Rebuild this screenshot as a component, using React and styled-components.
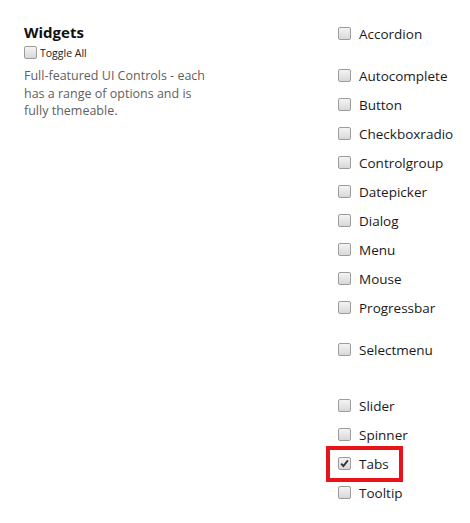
import React from "react";
import styled, { createGlobalStyle } from "styled-components";

const widgets = [
  { name: "Accordion" },
  { name: "Autocomplete", gap: 13 },
  { name: "Button" },
  { name: "Checkboxradio" },
  { name: "Controlgroup" },
  { name: "Datepicker" },
  { name: "Dialog" },
  { name: "Menu" },
  { name: "Mouse" },
  { name: "Progressbar" },
  { name: "Selectmenu", gap: 13 },
  { name: "Slider", gap: 27 },
  { name: "Spinner" },
  { name: "Tabs", checked: true, marked: true },
  { name: "Tooltip" },
];

const Global = createGlobalStyle`
  html, body {
    margin: 0;
    background: #fff;
  }
  body {
    font-family: "Open Sans", "Liberation Sans", sans-serif;
    color: #222;
  }
`;

export default function App() {
  return (
    <>
      <Global />
      <Page>
        <Intro>
          <Title>Widgets</Title>
          <ToggleRow>
            <Check />
            <span>Toggle All</span>
          </ToggleRow>
          <Description>
            Full-featured UI Controls - each has a range of options and is fully themeable.
          </Description>
        </Intro>
        <List>
          {widgets.map((w) => (
            <Item key={w.name} $gap={w.gap} $marked={w.marked}>
              <Check checked={w.checked} />
              <Label>{w.name}</Label>
            </Item>
          ))}
        </List>
      </Page>
    </>
  );
}

function Check({ checked }) {
  return (
    <Box>
      {checked && (
        <svg width="11" height="11" viewBox="0 0 11 11">
          <path d="M2.2 5.6 L4.4 8 L8.9 2.4" fill="none" stroke="#333" strokeWidth="1.9" />
        </svg>
      )}
    </Box>
  );
}

const Page = styled.div`
  display: flex;
  width: 470px;
  min-height: 523px;
`;

const Intro = styled.div`
  width: 190px;
  padding: 22px 10px 0 24px;
`;

const Title = styled.h2`
  margin: 0;
  font-size: 15px;
  line-height: 20px;
  font-weight: 700;
  color: #111;
`;

const ToggleRow = styled.label`
  display: flex;
  align-items: center;
  gap: 3px;
  height: 19px;
  padding-top: 1px;
  font-size: 10.5px;
  color: #222;
`;

const Description = styled.p`
  margin: 5px 0 0;
  font-size: 12.5px;
  line-height: 17.5px;
  color: #5f5f5f;
`;

const List = styled.div`
  display: flex;
  flex-direction: column;
  align-items: flex-start;
  padding: 19px 0 0 114px;
`;

const Item = styled.label`
  position: relative;
  display: inline-flex;
  align-items: center;
  gap: 8px;
  height: 29px;
  margin-top: ${(p) => p.$gap || 0}px;

  ${(p) =>
    p.$marked &&
    `
    &::before {
      content: "";
      position: absolute;
      top: -3px;
      bottom: -4px;
      left: -12px;
      right: -14px;
      border: 4px solid #e8131b;
    }
  `}
`;

const Box = styled.span`
  display: inline-flex;
  align-items: center;
  justify-content: center;
  box-sizing: border-box;
  width: 13px;
  height: 13px;
  border: 1px solid #9c9c9c;
  border-radius: 2px;
  background: linear-gradient(#f4f4f4, #d8d8d8);
  flex-shrink: 0;
`;

const Label = styled.span`
  font-size: 13.5px;
  color: #1a1a1a;
`;
